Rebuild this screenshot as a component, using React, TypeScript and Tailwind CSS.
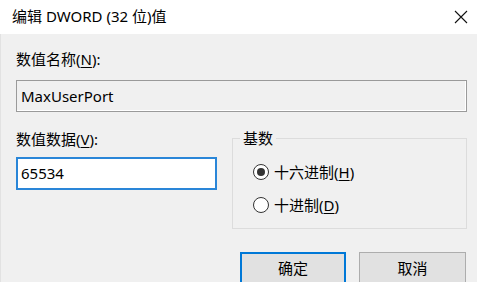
import React from "react";

const FONT = {
  fontFamily: '"Noto Sans", "Noto Sans CJK SC", sans-serif',
};

function Radio({ checked, label, mnemonic }: { checked?: boolean; label: string; mnemonic: string }) {
  return (
    <div className="flex h-[20px] items-center">
      <span className="flex size-[16px] items-center justify-center rounded-full border border-[#333] bg-white">
        {checked && <span className="size-[8px] rounded-full bg-[#333]" />}
      </span>
      <span className="ml-[5px] text-[15px] leading-[20px] text-black">
        {label}(<span className="underline underline-offset-2">{mnemonic}</span>)
      </span>
    </div>
  );
}

export default function App() {
  return (
    <div className="flex h-[282px] w-[477px] flex-col overflow-hidden bg-[#f0f0f0]" style={FONT}>
      {/* 标题栏 */}
      <div className="flex h-[34px] shrink-0 items-center justify-between bg-white pb-[2px] pl-[12px] pr-[9px]">
        <span className="text-[15px] leading-[20px] text-black">编辑 DWORD (32 位)值</span>
        <svg width="14" height="14" viewBox="0 0 14 14" className="mt-[1px]">
          <path d="M1 1 L13 13 M13 1 L1 13" stroke="#111" strokeWidth="1.1" />
        </svg>
      </div>

      <div className="flex flex-1 flex-col border-l border-[#e2e2e2] pl-[15px] pr-[10px] pt-[15px]">
        <div className="text-[15px] leading-[20px] text-black">
          数值名称(<span className="underline underline-offset-2">N</span>):
        </div>
        <div className="mt-[11px] flex h-[32px] items-center border border-[#9a9a9a] bg-[#f0f0f0] pl-[4px] text-[15px] text-black shadow-[inset_-1px_-1px_0_#ffffff]">
          MaxUserPort
        </div>

        <div className="mt-[17px] flex">
          <div className="flex w-[201px] flex-col">
            <div className="text-[15px] leading-[20px] text-black">
              数值数据(<span className="underline underline-offset-2">V</span>):
            </div>
            <div className="mt-[8px] flex h-[33px] items-center border-2 border-[#2a86d8] bg-white pl-[3px] text-[15px] text-black">
              65534
            </div>
          </div>

          <div className="relative ml-[15px] mt-[9px] flex h-[91px] flex-1 flex-col border border-[#dcdcdc] pl-[20px] pt-[23px]">
            <span className="absolute left-[7px] top-[-11px] bg-[#f0f0f0] px-[3px] text-[15px] leading-[20px] text-black">
              基数
            </span>
            <Radio checked label="十六进制" mnemonic="H" />
            <div className="mt-[13px]">
              <Radio label="十进制" mnemonic="D" />
            </div>
          </div>
        </div>

        <div className="mr-[1px] mt-[23px] flex justify-end gap-[13px]">
          <button className="flex h-[33px] w-[106px] shrink-0 items-center justify-center border-2 border-[#0078d7] bg-[#e1e1e1] text-[15px] text-black">
            确定
          </button>
          <button className="flex h-[33px] w-[107px] shrink-0 items-center justify-center border border-[#adadad] bg-[#e1e1e1] text-[15px] text-black">
            取消
          </button>
        </div>
      </div>
    </div>
  );
}
